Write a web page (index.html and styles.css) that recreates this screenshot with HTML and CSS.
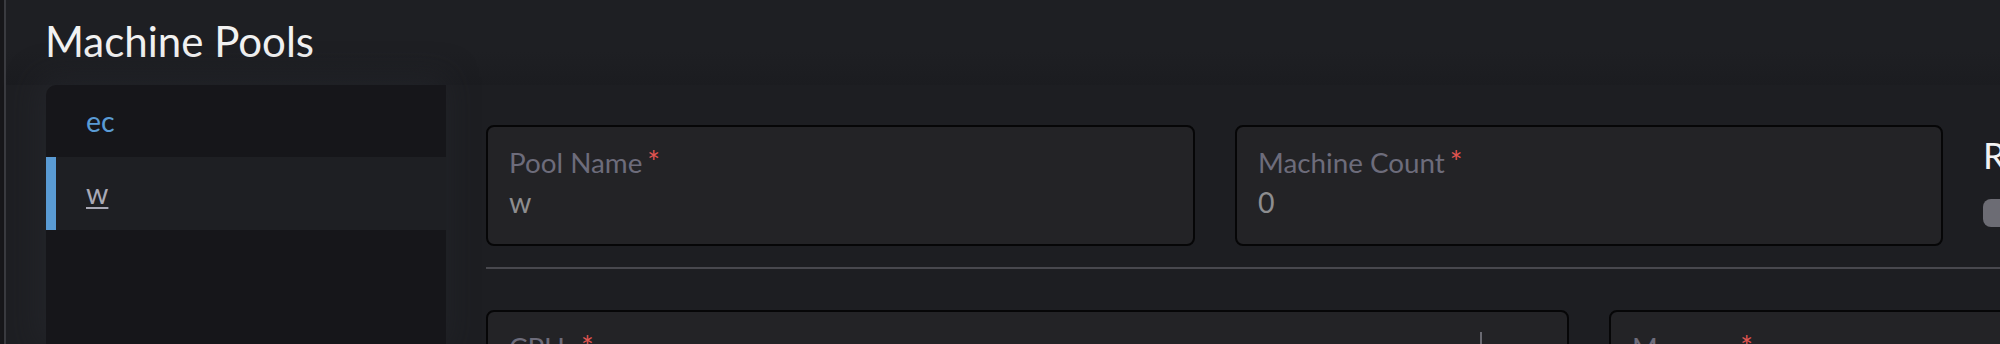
FILE: index.html
```html
<!DOCTYPE html>
<html lang="en">
<head>
<meta charset="utf-8">
<title>Machine Pools</title>
<link rel="stylesheet" href="styles.css">
</head>
<body>
<div class="app">
  <div class="rail"></div>
  <div class="page">
    <header class="page-header">
      <h1 class="title">Machine Pools</h1>
    </header>
    <div class="layout">
      <nav class="pool-list">
        <a class="pool-item">ec</a>
        <a class="pool-item active"><span class="pool-link">w</span></a>
      </nav>
      <section class="editor">
        <div class="row row-main">
          <div class="field">
            <div class="field-label">Pool Name<span class="req">*</span></div>
            <div class="field-value">w</div>
          </div>
          <div class="field">
            <div class="field-label">Machine Count<span class="req">*</span></div>
            <div class="field-value">0</div>
          </div>
          <div class="toggle-field">
            <div class="toggle-label">Root Volume</div>
            <div class="toggle"></div>
          </div>
        </div>
        <div class="divider"></div>
        <div class="row row-resources">
          <div class="field field-select">
            <div class="select-main">
              <div class="field-label">CPUs<span class="req">*</span></div>
              <div class="field-value">2</div>
            </div>
            <div class="select-sep"></div>
            <div class="select-indicator"></div>
          </div>
          <div class="field">
            <div class="field-label">Memory<span class="req">*</span></div>
            <div class="field-value">4096</div>
          </div>
        </div>
      </section>
    </div>
  </div>
</div>
</body>
</html>
```
FILE: styles.css
```css
html, body {
  margin: 0;
  padding: 0;
  height: 100%;
  overflow: hidden;
  background: #1e1f23;
  font-family: Lato, "Noto Sans", sans-serif;
}

.app {
  display: flex;
  height: 344px;
  width: 2000px;
  overflow: hidden;
}

.rail {
  flex: 0 0 4px;
  background: #17171a;
  border-right: 2px solid #3a3b40;
}

.page {
  flex: 1;
  display: flex;
  flex-direction: column;
  min-width: 0;
}

.page-header {
  height: 85px;
  box-sizing: border-box;
  padding: 15.5px 0 0 39px;
  background: linear-gradient(#1e1f23 0%, #1e1f23 60%, #1b1c20 100%);
}

.title {
  margin: 0;
  font-size: 42px;
  font-weight: 400;
  line-height: 1.2;
  color: #f2f2f2;
}

.layout {
  flex: 1;
  display: flex;
  padding-left: 40px;
  min-height: 0;
}

.pool-list {
  flex: 0 0 400px;
  display: flex;
  flex-direction: column;
  background: #16161a;
  border-top-left-radius: 10px;
  box-shadow: -4px -4px 30px 4px rgba(40, 41, 47, 0.5);
  position: relative;
  z-index: 1;
}

.pool-item {
  display: flex;
  align-items: center;
  height: 72px;
  box-sizing: border-box;
  padding-left: 40px;
  font-size: 28.5px;
  line-height: 34.56px;
  color: #5a9bd5;
}

.pool-item.active {
  height: 73px;
  background: #1e1f23;
  border-left: 10px solid #5a9bd4;
  padding-left: 30px;
  color: #a9a9b6;
}

.pool-link {
  text-decoration: underline;
  text-decoration-thickness: 2px;
  text-underline-offset: 3px;
}

.editor {
  flex: 1;
  min-width: 0;
  background: #1d1e22;
  padding: 40px 0 0 40px;
  overflow: hidden;
}

.row {
  display: grid;
  column-gap: 40px;
}

.row-main {
  grid-template-columns: 709px 708px 300px;
}

.row-resources {
  grid-template-columns: 1083px 1083px;
}

.field {
  box-sizing: border-box;
  height: 121px;
  background: #232326;
  border: 2px solid #060607;
  border-radius: 8px;
  padding: 19px 20px 24.4px 21px;
  display: flex;
  flex-direction: column;
  gap: 4.4px;
}

.field-label {
  font-size: 27.8px;
  line-height: 34.56px;
  color: #6d6c7b;
  white-space: nowrap;
}

.req {
  color: #e05450;
  font-size: 30px;
  line-height: 0;
  margin-left: 5px;
}

.field-value {
  font-size: 28.5px;
  line-height: 34.56px;
  color: #8d8d8f;
}

.field-select {
  flex-direction: row;
  gap: 0;
  padding-right: 0;
  padding-bottom: 0;
}

.select-main {
  flex: 1;
  display: flex;
  flex-direction: column;
  gap: 4.4px;
}

.select-sep {
  flex: 0 0 2px;
  margin-top: 1px;
  background: #6a6a72;
}

.select-indicator {
  flex: 0 0 85px;
}

.toggle-field {
  display: flex;
  flex-direction: column;
  padding-top: 8.5px;
  gap: 22px;
}

.toggle-label {
  font-size: 36px;
  line-height: 1.2;
  color: #f2f2f2;
  white-space: nowrap;
}

.toggle {
  width: 56px;
  height: 28px;
  border-radius: 8px;
  background: #6c6c74;
}

.divider {
  height: 2px;
  margin: 21px 0 41px;
  background: #48484e;
}
```
